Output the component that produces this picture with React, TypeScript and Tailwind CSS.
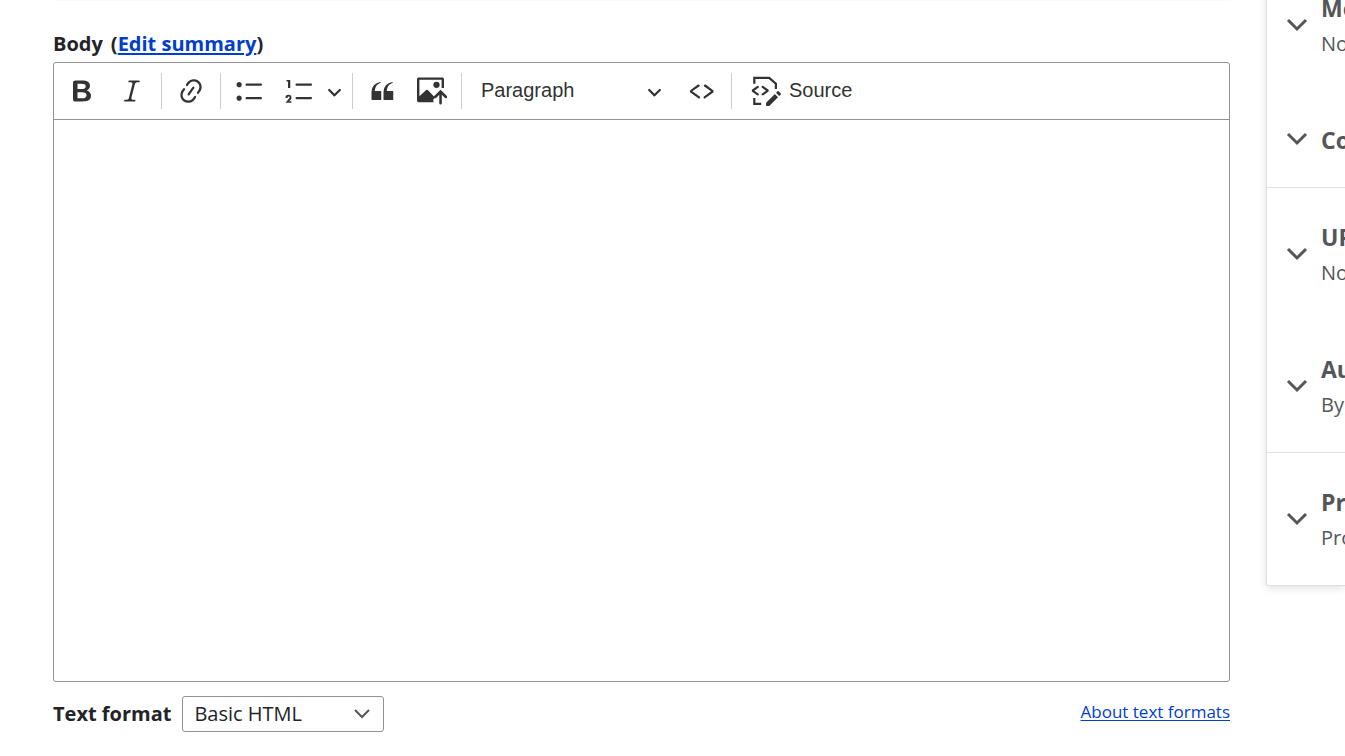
import type { ReactNode } from "react";

const ICONS = {
  bold: "M10.187 17H5.773c-.637 0-1.092-.138-1.364-.415-.273-.277-.409-.718-.409-1.323V4.738c0-.617.14-1.062.419-1.332.279-.27.73-.406 1.354-.406h4.68c.69 0 1.288.041 1.793.124.506.083.96.242 1.36.478.341.197.644.447.906.75a3.262 3.262 0 0 1 .808 2.162c0 1.401-.722 2.426-2.167 3.075C15.05 10.175 16 11.315 16 13.01a3.756 3.756 0 0 1-2.296 3.504 6.1 6.1 0 0 1-1.517.377c-.571.073-1.238.11-2 .11zm-.217-6.217H7v4.087h3.069c1.977 0 2.965-.69 2.965-2.072 0-.707-.256-1.22-.768-1.537-.512-.319-1.277-.478-2.296-.478zM7 5.13v3.619h2.606c.729 0 1.292-.067 1.69-.2a1.6 1.6 0 0 0 .91-.765c.165-.267.247-.566.247-.897 0-.707-.26-1.176-.778-1.409-.519-.232-1.31-.348-2.375-.348H7z",
  italic:
    "m9.586 14.633.021.004c-.036.335.095.655.393.962.082.083.173.15.274.201h1.474a.6.6 0 1 1 0 1.2H5.304a.6.6 0 0 1 0-1.2h1.15c.474-.07.809-.182 1.005-.334.157-.122.291-.32.404-.597l2.416-9.55a1.053 1.053 0 0 0-.281-.823 1.12 1.12 0 0 0-.442-.296H8.15a.6.6 0 0 1 0-1.2h6.443a.6.6 0 1 1 0 1.2h-1.195c-.376.056-.65.155-.823.296-.215.175-.423.439-.623.79l-2.366 9.347z",
  link: "m11.077 15 .991-1.416a.75.75 0 1 1 1.229.86l-1.148 1.64a.748.748 0 0 1-.217.206 5.251 5.251 0 0 1-8.503-5.955.741.741 0 0 1 .12-.274l1.147-1.639a.75.75 0 1 1 1.228.86L4.933 10.7l.006.003a3.75 3.75 0 0 0 6.132 4.294l.006.004zm5.494-5.335a.748.748 0 0 1-.12.274l-1.147 1.639a.75.75 0 1 1-1.228-.86l.86-1.23a3.75 3.75 0 0 0-6.144-4.301l-.86 1.229a.75.75 0 0 1-1.229-.86l1.148-1.64a.748.748 0 0 1 .217-.206 5.251 5.251 0 0 1 8.503 5.955zm-4.563-2.532a.75.75 0 0 1 .184 1.045l-3.155 4.505a.75.75 0 1 1-1.229-.86l3.155-4.506a.75.75 0 0 1 1.045-.184z",
  bullets:
    "M7 5.75c0 .414.336.75.75.75h9.5a.75.75 0 1 0 0-1.5h-9.5a.75.75 0 0 0-.75.75zm-6 0C1 4.784 1.777 4 2.75 4c.966 0 1.75.777 1.75 1.75 0 .966-.777 1.75-1.75 1.75C1.784 7.5 1 6.723 1 5.75zm6 9c0 .414.336.75.75.75h9.5a.75.75 0 1 0 0-1.5h-9.5a.75.75 0 0 0-.75.75zm-6 0c0-.966.777-1.75 1.75-1.75.966 0 1.75.777 1.75 1.75 0 .966-.777 1.75-1.75 1.75-.966 0-1.75-.777-1.75-1.75z",
  numbers:
    "M7 5.75c0 .414.336.75.75.75h9.5a.75.75 0 1 0 0-1.5h-9.5a.75.75 0 0 0-.75.75zM3.5 3v5H2V3.7H1v-1h2.5V3zM.343 17.857l2.59-3.257H2.92a.6.6 0 1 0-1.04 0H.302a2 2 0 1 1 3.995 0h-.001c-.048.405-.16.734-.333.988-.175.254-.59.692-1.244 1.312H4.3v1h-4l.043-.043zM7 14.75a.75.75 0 0 1 .75-.75h9.5a.75.75 0 1 1 0 1.5h-9.5a.75.75 0 0 1-.75-.75z",
  quote:
    "M3 10.423a6.5 6.5 0 0 1 6.056-6.408l.038.67C6.448 5.423 5.354 7.663 5.22 10H9c.552 0 .5.432.5.986v4.511c0 .554-.448.503-1 .503h-5c-.552 0-.5-.449-.5-1.003v-4.574zm8 0a6.5 6.5 0 0 1 6.056-6.408l.038.67c-2.646.739-3.74 2.979-3.873 5.315H17c.552 0 .5.432.5.986v4.511c0 .554-.448.503-1 .503h-5c-.552 0-.5-.449-.5-1.003v-4.574z",
  code: "m12.5 5.7 5.2 3.9v1.3l-5.6 4c-.1.2-.3.2-.5.2-.3-.1-.6-.7-.6-1l.3-.4 4.7-3.5L11.5 7l-.2-.2c-.1-.3-.1-.6 0-.8.2-.2.5-.4.8-.4a.8.8 0 0 1 .4.1zm-5.2 0L2 9.6v1.3l5.6 4c.1.2.3.2.5.2.3-.1.7-.7.6-1 0-.2 0-.3-.2-.4l-5-3.5L8.2 7l.2-.2c.1-.3.1-.6 0-.8-.2-.2-.5-.4-.8-.4a.8.8 0 0 0-.3.1z",
};

function Icon({ children }: { children: ReactNode }) {
  return (
    <svg viewBox="0 0 20 20" className="size-[30px] shrink-0 fill-current" aria-hidden="true">
      {children}
    </svg>
  );
}

function Arrow() {
  return (
    <svg viewBox="0 0 10 10" className="size-[15px] shrink-0 fill-current" aria-hidden="true">
      <path d="M.941 4.523a.75.75 0 1 1 1.06-1.06l3.006 3.005 3.005-3.005a.75.75 0 1 1 1.06 1.06l-3.549 3.55a.75.75 0 0 1-1.168-.136L.941 4.523z" />
    </svg>
  );
}

function ToolButton({ label, children }: { label: string; children: ReactNode }) {
  return (
    <button type="button" aria-label={label} className="flex h-10 w-[50px] shrink-0 items-center justify-center">
      <Icon>{children}</Icon>
    </button>
  );
}

function Separator() {
  return <span className="mx-1 h-9 w-px shrink-0 bg-[#ccced1]" />;
}

function Toolbar() {
  return (
    <div
      role="toolbar"
      aria-label="Editor toolbar"
      className="flex h-[57px] items-center border-b border-[#919297] px-[3px] font-['Liberation_Sans',sans-serif] text-xl text-[#333]"
    >
      <ToolButton label="Bold"><path d={ICONS.bold} /></ToolButton>
      <ToolButton label="Italic"><path d={ICONS.italic} /></ToolButton>
      <Separator />
      <ToolButton label="Link"><path d={ICONS.link} /></ToolButton>
      <Separator />
      <ToolButton label="Bulleted List"><path d={ICONS.bullets} /></ToolButton>
      <ToolButton label="Numbered List"><path d={ICONS.numbers} /></ToolButton>
      <button type="button" aria-label="Numbered list styles" className="flex h-10 w-[23px] shrink-0 items-center pl-[2px]">
        <Arrow />
      </button>
      <Separator />
      <ToolButton label="Block quote"><path d={ICONS.quote} /></ToolButton>
      <ToolButton label="Insert image">
        <path d="M1.2 1C.54 1 0 1.47 0 2.1v14.25c0 .64.53 1.15 1.19 1.15h9.9l-.3-1.7 1.2-1.4-4.8-5a.75.75 0 0 0-1.05 0L1.6 13.5V2.55h14.8V8H18V2.1c0-.63-.55-1.1-1.2-1.1H1.2z" />
        <circle cx="13" cy="5.9" r="2.1" />
        <path d="M15.7 18.2v-7.6M12.1 14l3.6-3.6 3.6 3.6" fill="none" stroke="currentColor" strokeWidth="1.7" strokeLinecap="round" />
      </ToolButton>
      <Separator />
      <button type="button" aria-label="Heading" className="flex h-10 w-[211px] shrink-0 items-center justify-between px-[15px]">
        <span className="pb-0.5">Paragraph</span>
        <Arrow />
      </button>
      <ToolButton label="Code"><path d={ICONS.code} /></ToolButton>
      <Separator />
      <button type="button" className="flex h-10 shrink-0 items-center gap-2 px-[15px]">
        <Icon>
          <path d="M2.2 5.2V1.2h9.9l4.5 3.9v3.6M2.2 14.6v3.9h4.6" fill="none" stroke="currentColor" strokeWidth="1.5" />
          <path d="M4.06 6.64a.75.75 0 0 1 .958 1.15l-.085.07L2.29 9.75l2.646 1.89c.302.216.4.62.232.951l-.058.095a.75.75 0 0 1-.951.232l-.095-.058-3.5-2.5V9.14l3.496-2.5zm4.194 6.22a.75.75 0 0 1-.958-1.149l.085-.07 2.643-1.89-2.646-1.89a.75.75 0 0 1-.232-.952l.058-.095a.75.75 0 0 1 .95-.232l.096.058 3.5 2.5v1.22l-3.496 2.5zm7.644-.836 2.122 2.122-5.825 5.809-2.125-.005.003-2.116zm2.539-1.847 1.414 1.414a.5.5 0 0 1 0 .707l-1.06 1.06-2.122-2.12 1.061-1.061a.5.5 0 0 1 .707 0z" />
        </Icon>
        <span className="pb-0.5">Source</span>
      </button>
    </div>
  );
}

type Section = { title: string; summary?: string; divider?: boolean };

const SECTIONS: Section[] = [
  { title: "Menu settings", summary: "Not in menu" },
  { title: "Comment settings", divider: true },
  { title: "URL alias", summary: "No alias" },
  { title: "Authoring information", summary: "By", divider: true },
  { title: "Promotion options", summary: "Promoted to front page" },
];

function SidebarSection({ title, summary, divider }: Section) {
  return (
    <button
      type="button"
      className={`flex w-full items-center gap-[13px] py-[29px] pl-[19px] text-left whitespace-nowrap text-[#55565b] ${
        divider ? "border-b border-[#dedfe4]" : ""
      }`}
    >
      <svg viewBox="0 0 22 22" className="size-[22px] shrink-0" fill="none" stroke="currentColor" strokeWidth="3" aria-hidden="true">
        <path d="M2 6l9 9 9-9" />
      </svg>
      <span className="flex flex-col pt-0.5">
        <span className="text-[23px] leading-9 font-bold">{title}</span>
        {summary && <span className="text-xl leading-9">{summary}</span>}
      </span>
    </button>
  );
}

export default function App() {
  return (
    <div className="flex min-h-screen items-start gap-9 overflow-hidden bg-white pl-[53px] font-['Open_Sans','Noto_Sans',sans-serif] text-[#232429]">
      <main className="min-w-0 flex-1">
        <div className="h-px bg-[#fafafa]" />
        <div className="mt-[26px] mb-0.5 flex h-[33px] items-center text-xl font-bold">
          <label htmlFor="body">Body</label>
          <span className="ml-2">
            (
            <a href="#summary" className="text-[#003ecc] underline decoration-2 underline-offset-2">Edit summary</a>
            )
          </span>
        </div>
        <div className="rounded-[3px] border border-[#919297]">
          <Toolbar />
          <textarea id="body" className="block h-[561px] w-full resize-none p-4 text-xl outline-none" />
        </div>
        <div className="mt-[14px] flex items-start justify-between">
          <div className="flex items-center gap-[11px]">
            <label htmlFor="format" className="text-xl font-bold">Text format</label>
            <div className="relative">
              <select
                id="format"
                className="block h-9 w-[202px] appearance-none rounded-[3px] border border-[#919297] bg-white pl-[11px] text-xl leading-8"
              >
                <option>Basic HTML</option>
              </select>
              <svg viewBox="0 0 16 10" className="pointer-events-none absolute top-[13px] right-[14px] h-[10px] w-4" fill="none" stroke="#55565b" strokeWidth="2" aria-hidden="true">
                <path d="M1 1l7 7 7-7" />
              </svg>
            </div>
          </div>
          <a href="#formats" className="text-[17px] leading-8 text-[#003ecc] underline underline-offset-2">About text formats</a>
        </div>
      </main>
      <aside className="-mt-[41px] w-[79px] shrink-0 rounded-bl-[3px] border-b border-l border-[#dedfe4] shadow-[0_2px_8px_rgba(0,0,0,0.12)]">
        <div className="overflow-hidden">
          {SECTIONS.map((section) => (
            <SidebarSection key={section.title} {...section} />
          ))}
        </div>
      </aside>
    </div>
  );
}
